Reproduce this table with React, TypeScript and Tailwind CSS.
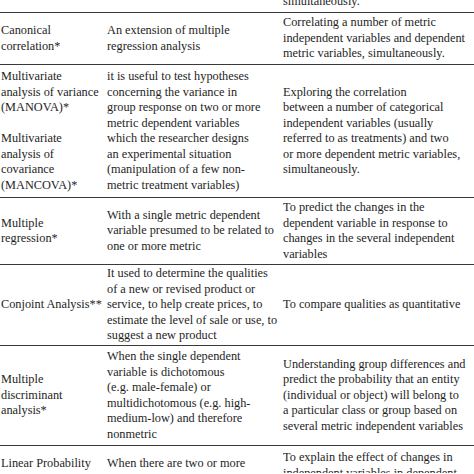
import React from "react";

type Row = {
    h: string;
    method: string[];
    use: string[];
    aim: string[];
};

const rows: Row[] = [
    {
        h: "h-[52px]",
        method: ["Canonical", "correlation*"],
        use: ["An extension of multiple", "regression analysis"],
        aim: [
            "Correlating a number of metric",
            "independent variables and dependent",
            "metric variables, simultaneously.",
        ],
    },
    {
        h: "h-[133px]",
        method: [
            "Multivariate",
            "analysis of variance",
            "(MANOVA)*",
            "",
            "Multivariate",
            "analysis of",
            "covariance",
            "(MANCOVA)*",
        ],
        use: [
            "it is useful to test hypotheses",
            "concerning the variance in",
            "group response on two or more",
            "metric dependent variables",
            "which the researcher designs",
            "an experimental situation",
            "(manipulation of a few non-",
            "metric treatment variables)",
        ],
        aim: [
            "Exploring the correlation",
            "between a number of categorical",
            "independent variables (usually",
            "referred to as treatments) and two",
            "or more dependent metric variables,",
            "simultaneously.",
        ],
    },
    {
        h: "h-[67px]",
        method: ["Multiple", "regression*"],
        use: [
            "With a single metric dependent",
            "variable presumed to be related to",
            "one or more metric",
        ],
        aim: [
            "To predict the changes in the",
            "dependent variable in response to",
            "changes in the several independent",
            "variables",
        ],
    },
    {
        h: "h-[81px]",
        method: ["Conjoint Analysis**"],
        use: [
            "It used to determine the qualities",
            "of a new or revised product or",
            "service, to help create prices, to",
            "estimate the level of sale or use, to",
            "suggest a new product",
        ],
        aim: ["To compare qualities as quantitative"],
    },
    {
        h: "h-[100px]",
        method: ["Multiple", "discriminant", "analysis*"],
        use: [
            "When the single dependent",
            "variable is dichotomous",
            "(e.g. male-female) or",
            "multidichotomous (e.g. high-",
            "medium-low) and therefore",
            "nonmetric",
        ],
        aim: [
            "Understanding group differences and",
            "predict the probability that an entity",
            "(individual or object) will belong to",
            "a particular class or group based on",
            "several metric independent variables",
        ],
    },
];

function Lines({ lines }: { lines: string[] }) {
    return (
        <div className="flex flex-col">
            {lines.map((l, i) => (
                <div key={i} className="h-[15.5px] whitespace-nowrap">
                    {l}
                </div>
            ))}
        </div>
    );
}

export default function App() {
    return (
        <div
            className="w-[474px] h-[474px] overflow-hidden bg-white text-[#1e1e1e] text-[12.3px] leading-[15.5px]"
            style={{ fontFamily: '"Liberation Serif", "Times New Roman", serif' }}
        >
            {/* tail of the previous row, cut off at the top */}
            <div className="h-[12px] grid grid-cols-[107px_176px_1fr] grid-rows-[12px] items-end overflow-hidden">
                <div />
                <div />
                <div className="pb-[3px] whitespace-nowrap">simultaneously.</div>
            </div>

            {rows.map((r, i) => (
                <div
                    key={i}
                    className={`${r.h} grid grid-cols-[107px_176px_1fr] border-t-[1.5px] border-[#3a3a3a]`}
                >
                    <div className="flex flex-col justify-center pl-[1px]">
                        <Lines lines={r.method} />
                    </div>
                    <div className="flex flex-col justify-center">
                        <Lines lines={r.use} />
                    </div>
                    <div className="flex flex-col justify-center">
                        <Lines lines={r.aim} />
                    </div>
                </div>
            ))}

            <div className="h-[28px] grid grid-cols-[107px_176px_1fr] border-t-[1.5px] border-[#3a3a3a] overflow-hidden">
                <div className="pt-[10px] pl-[1px]">
                    <Lines lines={["Linear Probability"]} />
                </div>
                <div className="pt-[10px]">
                    <Lines lines={["When there are two or more"]} />
                </div>
                <div className="pt-[4px]">
                    <Lines
                        lines={[
                            "To explain the effect of changes in",
                            "independent variables in dependent",
                        ]}
                    />
                </div>
            </div>
        </div>
    );
}
